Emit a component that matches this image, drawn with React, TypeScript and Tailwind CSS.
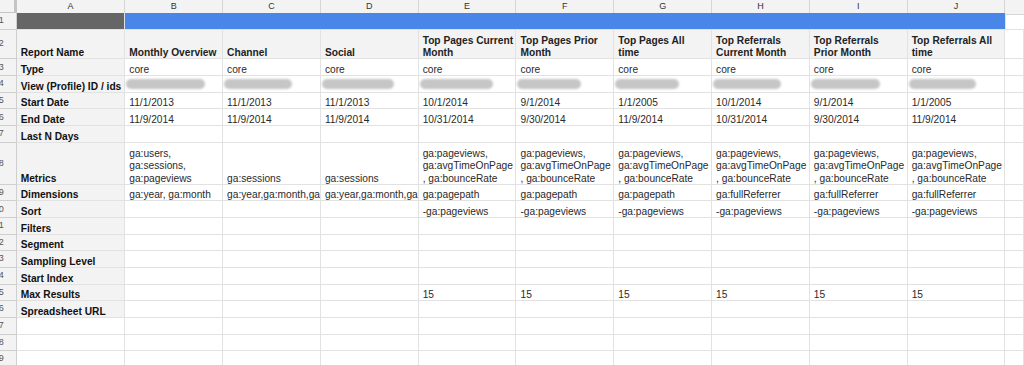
import type { ReactNode } from 'react'

interface Report {
  title: string[]
  viewIdWidth: string
  start: string
  end: string
  metrics: string[]
  dims: string
  sort: string
  max: string
}

const reports: Report[] = [
  { title: ['Monthly Overview'], viewIdWidth: 'w-[79px]', start: '11/1/2013', end: '11/9/2014', metrics: ['ga:users,', 'ga:sessions,', 'ga:pageviews'], dims: 'ga:year, ga:month', sort: '', max: '' },
  { title: ['Channel'], viewIdWidth: 'w-[68px]', start: '11/1/2013', end: '11/9/2014', metrics: ['ga:sessions'], dims: 'ga:year,ga:month,ga', sort: '', max: '' },
  { title: ['Social'], viewIdWidth: 'w-[72px]', start: '11/1/2013', end: '11/9/2014', metrics: ['ga:sessions'], dims: 'ga:year,ga:month,ga', sort: '', max: '' },
  { title: ['Top Pages Current', 'Month'], viewIdWidth: 'w-[73px]', start: '10/1/2014', end: '10/31/2014', metrics: ['ga:pageviews,', 'ga:avgTimeOnPage', ', ga:bounceRate'], dims: 'ga:pagepath', sort: '-ga:pageviews', max: '15' },
  { title: ['Top Pages Prior', 'Month'], viewIdWidth: 'w-[64px]', start: '9/1/2014', end: '9/30/2014', metrics: ['ga:pageviews,', 'ga:avgTimeOnPage', ', ga:bounceRate'], dims: 'ga:pagepath', sort: '-ga:pageviews', max: '15' },
  { title: ['Top Pages All', 'time'], viewIdWidth: 'w-[64px]', start: '1/1/2005', end: '11/9/2014', metrics: ['ga:pageviews,', 'ga:avgTimeOnPage', ', ga:bounceRate'], dims: 'ga:pagepath', sort: '-ga:pageviews', max: '15' },
  { title: ['Top Referrals', 'Current Month'], viewIdWidth: 'w-[68px]', start: '10/1/2014', end: '10/31/2014', metrics: ['ga:pageviews,', 'ga:avgTimeOnPage', ', ga:bounceRate'], dims: 'ga:fullReferrer', sort: '-ga:pageviews', max: '15' },
  { title: ['Top Referrals', 'Prior Month'], viewIdWidth: 'w-[69px]', start: '9/1/2014', end: '9/30/2014', metrics: ['ga:pageviews,', 'ga:avgTimeOnPage', ', ga:bounceRate'], dims: 'ga:fullReferrer', sort: '-ga:pageviews', max: '15' },
  { title: ['Top Referrals All', 'time'], viewIdWidth: 'w-[67px]', start: '1/1/2005', end: '11/9/2014', metrics: ['ga:pageviews,', 'ga:avgTimeOnPage', ', ga:bounceRate'], dims: 'ga:fullReferrer', sort: '-ga:pageviews', max: '15' },
]

const LETTERS = ['A', 'B', 'C', 'D', 'E', 'F', 'G', 'H', 'I', 'J']

const GRID = 'grid grid-cols-[16.7px_108.6px_repeat(9,97.8px)_1fr]'
const CELL = 'flex items-end overflow-hidden whitespace-nowrap border-r border-b border-[#e2e2e2] pl-[4px] leading-[12.5px]'

function RowNum({ n }: { n: number }) {
  return (
    <div className="flex items-center justify-end overflow-hidden border-r border-b border-[#cfcfcf] bg-[#f3f3f3] pr-[12px] text-[9px] text-[#555]">
      {n}
    </div>
  )
}

// text sits low in the cell, like the sheet's bottom alignment
function Text({ children }: { children?: ReactNode }) {
  return <span className="relative top-[1.5px]">{children}</span>
}

function Label({ children }: { children?: ReactNode }) {
  return (
    <div className={`${CELL} bg-[#f3f3f3] font-bold text-[#111]`}>
      <Text>{children}</Text>
    </div>
  )
}

function Cell({ children }: { children?: ReactNode }) {
  return (
    <div className={`${CELL} text-[#2a2a2a]`}>
      <Text>{children}</Text>
    </div>
  )
}

// one plain data row: label in column A, one value per report, empty K
function DataRow({ n, label, values, height = 'h-[16.67px]' }: { n: number; label?: string; values: ReactNode[]; height?: string }) {
  return (
    <div className={`${GRID} ${height}`}>
      <RowNum n={n} />
      {label !== undefined ? <Label>{label}</Label> : <Cell />}
      {values.map((v, i) => (
        <Cell key={i}>{v}</Cell>
      ))}
      <Cell />
    </div>
  )
}

export default function App() {
  const blank = reports.map(() => '')

  return (
    <div className="h-[365px] w-[1024px] overflow-hidden bg-white font-['Liberation_Sans',Arial,sans-serif] text-[10.2px]">
      {/* column letters */}
      <div className={`${GRID} h-[13px]`}>
        <div className="border-r-[3px] border-b-[3px] border-[#c4c4c4] bg-[#f3f3f3]" />
        {LETTERS.map((l) => (
          <div key={l} className="flex items-center justify-center border-r border-b border-[#d6d6d6] bg-[#f3f3f3] text-[9px] text-[#333]">
            {l}
          </div>
        ))}
        <div className="border-b border-[#d6d6d6] bg-[#f3f3f3]" />
      </div>

      {/* colour band */}
      <div className={`${GRID} h-[16.7px]`}>
        <RowNum n={1} />
        <div className="border-r border-b border-[#e2e2e2] bg-[#666666]" />
        {reports.map((_, i) => (
          <div key={i} className="border-b border-[#e2e2e2] bg-[#4a86e8]" />
        ))}
        <div className="border-b border-l border-[#e2e2e2]" />
      </div>

      {/* report names */}
      <div className={`${GRID} h-[29.8px]`}>
        <RowNum n={2} />
        <Label>Report Name</Label>
        {reports.map((r, i) => (
          <div key={i} className={`${CELL} flex-col !items-start justify-end bg-[#f3f3f3] font-bold text-[#222]`}>
            {r.title.map((t) => (
              <Text key={t}>{t}</Text>
            ))}
          </div>
        ))}
        <Cell />
      </div>

      <DataRow n={3} label="Type" values={reports.map(() => 'core')} />

      {/* profile ids are blurred out */}
      <div className={`${GRID} h-[16.67px]`}>
        <RowNum n={4} />
        <Label>View (Profile) ID / ids</Label>
        {reports.map((r, i) => (
          <div key={i} className="flex items-center border-r border-b border-[#e2e2e2] pt-[1px] pl-[1px]">
            <div className={`${r.viewIdWidth} h-[10px] rounded-full bg-[#c6c6c6] blur-[0.8px]`} />
          </div>
        ))}
        <Cell />
      </div>

      <DataRow n={5} label="Start Date" values={reports.map((r) => r.start)} />
      <DataRow n={6} label="End Date" values={reports.map((r) => r.end)} />
      <DataRow n={7} label="Last N Days" values={blank} />

      <div className={`${GRID} h-[42px]`}>
        <RowNum n={8} />
        <Label>Metrics</Label>
        {reports.map((r, i) => (
          <div key={i} className={`${CELL} flex-col !items-start justify-end text-[#2a2a2a]`}>
            {r.metrics.map((m) => (
              <Text key={m}>{m}</Text>
            ))}
          </div>
        ))}
        <Cell />
      </div>

      <DataRow n={9} label="Dimensions" values={reports.map((r) => r.dims)} />
      <DataRow n={10} label="Sort" values={reports.map((r) => r.sort)} />
      <DataRow n={11} label="Filters" values={blank} />
      <DataRow n={12} label="Segment" values={blank} />
      <DataRow n={13} label="Sampling Level" values={blank} />
      <DataRow n={14} label="Start Index" values={blank} />
      <DataRow n={15} label="Max Results" values={reports.map((r) => r.max)} />
      <DataRow n={16} label="Spreadsheet URL" values={blank} />
      <DataRow n={17} values={blank} />
      <DataRow n={18} values={blank} />
      <DataRow n={19} values={blank} />
    </div>
  )
}
